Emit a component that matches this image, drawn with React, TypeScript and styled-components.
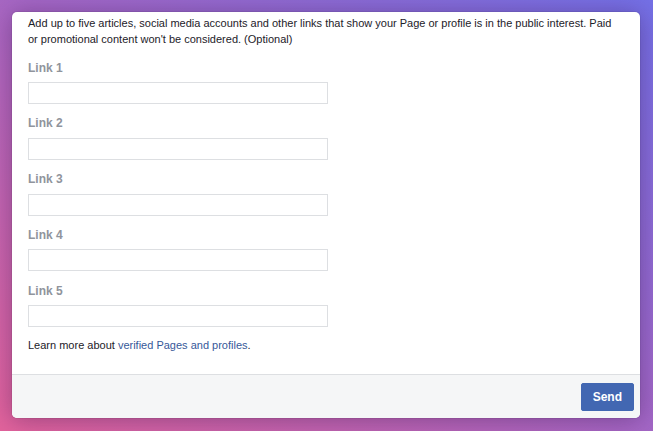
import React from "react";
import styled, { createGlobalStyle } from "styled-components";

const GlobalStyle = createGlobalStyle`
  html, body {
    margin: 0;
    height: 100%;
  }
  body {
    background: linear-gradient(35deg, #e2639c 0%, #a367c6 52%, #7470e6 100%);
    font-family: "Liberation Sans", Helvetica, Arial, sans-serif;
    overflow: hidden;
  }
  #root {
    height: 100%;
  }
`;

const Page = styled.div`
  height: 100%;
  padding: 12px 13px 13px 12px;
  box-sizing: border-box;
  display: flex;
`;

const Dialog = styled.div`
  flex: 1;
  display: flex;
  flex-direction: column;
  background: #fff;
  border-radius: 5px;
  overflow: hidden;
  box-shadow: 0 2px 24px rgba(40, 10, 60, 0.35), 0 0 0 1px rgba(0, 0, 0, 0.06);
`;

const Body = styled.div`
  flex: 1;
  padding: 3px 16px 0 16px;
  color: #1d2129;
  font-size: 11px;
  line-height: 16px;
`;

const Intro = styled.p`
  margin: 0 0 12.5px;
`;

const Field = styled.div`
  display: flex;
  flex-direction: column;
  margin-bottom: 11.25px;

  &:last-of-type {
    margin-bottom: 10px;
  }
`;

const Label = styled.label`
  color: #90949c;
  font-weight: bold;
  font-size: 12px;
  line-height: 16px;
  margin-bottom: 6.5px;
`;

const Input = styled.input`
  box-sizing: border-box;
  width: 300px;
  height: 22px;
  border: 1px solid #dddfe2;
  border-radius: 0;
  padding: 0 4px;
  font: inherit;
  outline: none;
`;

const Note = styled.p`
  margin: 0;
`;

const Link = styled.a`
  color: #365899;
  text-decoration: none;
`;

const Footer = styled.div`
  flex: 0 0 auto;
  height: 44px;
  box-sizing: border-box;
  border-top: 1px solid #dddfe2;
  background: #f5f6f7;
  display: flex;
  align-items: center;
  justify-content: flex-end;
  padding: 0 6px 0 16px;
`;

const SendButton = styled.button`
  height: 28px;
  padding: 0 11px;
  background: #4267b2;
  border: 1px solid #4267b2;
  border-radius: 2px;
  color: #fff;
  font-family: inherit;
  font-weight: bold;
  font-size: 12px;
  cursor: pointer;
`;

const links = [1, 2, 3, 4, 5];

export default function App() {
  return (
    <>
      <GlobalStyle />
      <Page>
        <Dialog>
          <Body>
            <Intro>
              Add up to five articles, social media accounts and other links that show your Page or
              profile is in the public interest. Paid or promotional content won't be considered.
              (Optional)
            </Intro>
            {links.map((n) => (
              <Field key={n}>
                <Label htmlFor={`link-${n}`}>Link {n}</Label>
                <Input id={`link-${n}`} type="text" />
              </Field>
            ))}
            <Note>
              Learn more about <Link href="#">verified Pages and profiles</Link>.
            </Note>
          </Body>
          <Footer>
            <SendButton>Send</SendButton>
          </Footer>
        </Dialog>
      </Page>
    </>
  );
}
